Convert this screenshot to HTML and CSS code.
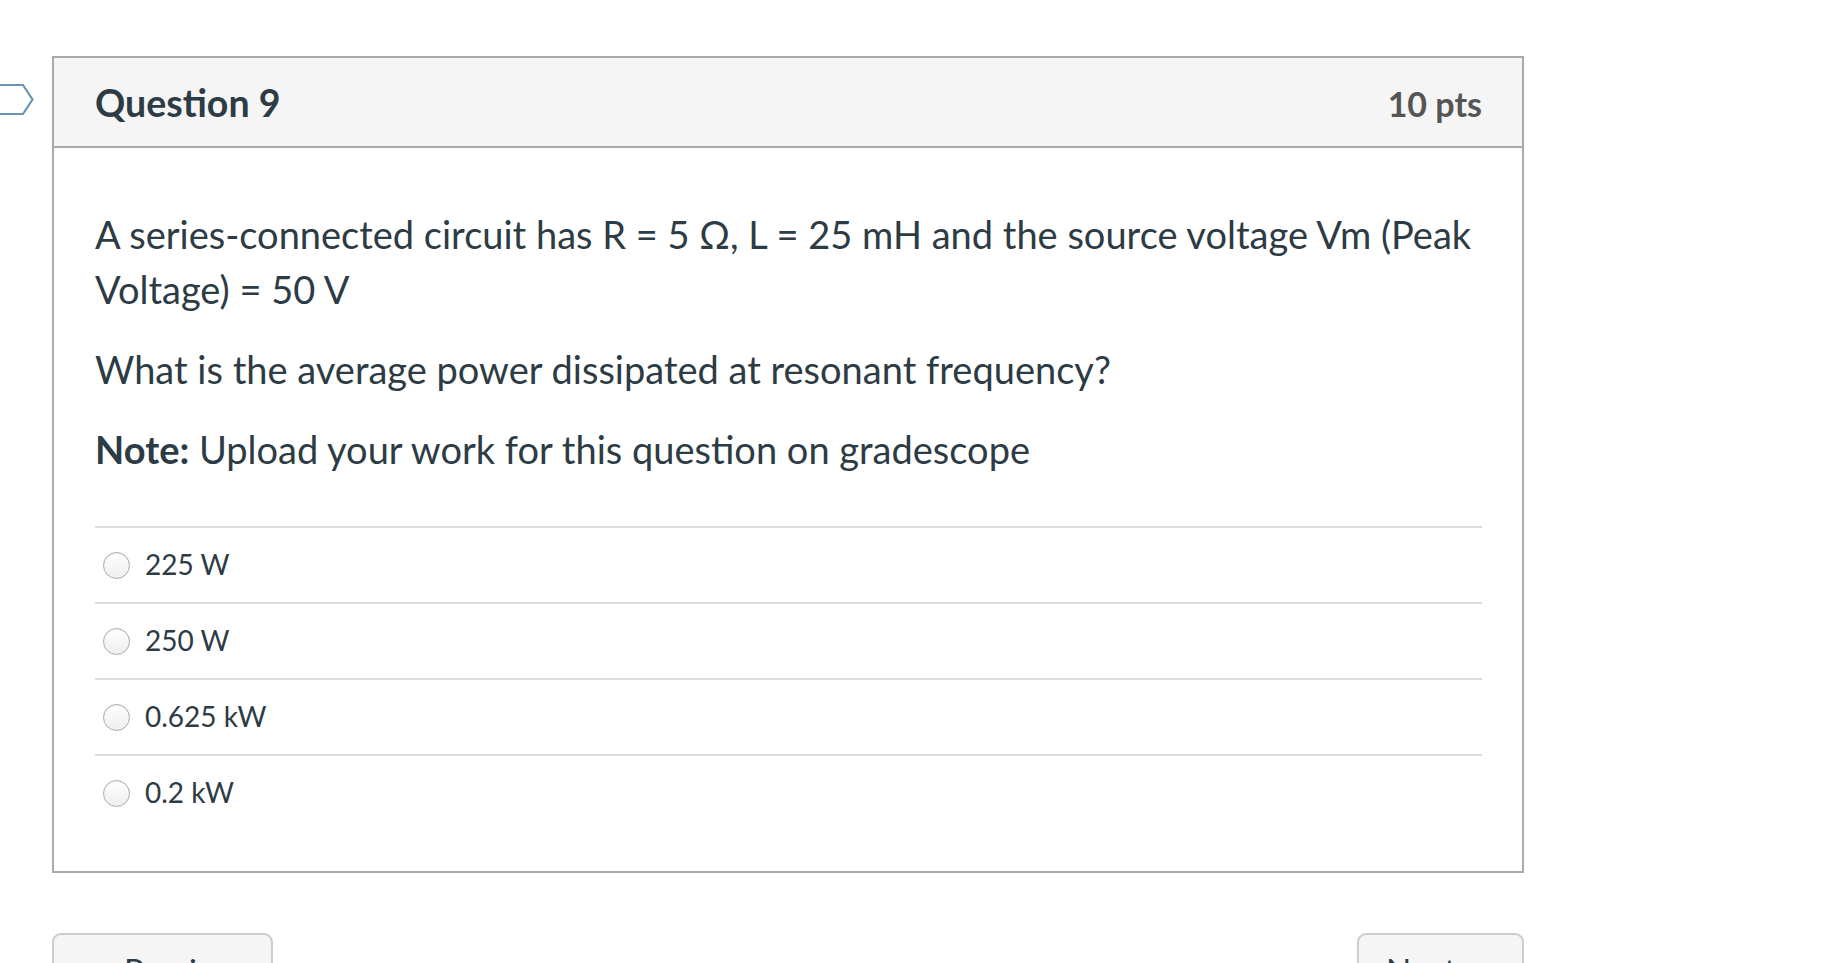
FILE: index.html
```html
<!DOCTYPE html>
<html lang="en">
<head>
<meta charset="UTF-8">
<title>Question 9</title>
<link rel="stylesheet" href="styles.css">
</head>
<body>
<div class="quiz">
    <div class="question">
        <svg class="flag" width="36" height="34" viewBox="0 0 36 34">
            <path d="M-4 2 H23 L32.5 16.5 L23 31 H-4" fill="none" stroke="#6a94b4" stroke-width="2.2" stroke-linejoin="miter"/>
        </svg>
        <div class="header">
            <span class="name">Question 9</span>
            <span class="points">10 pts</span>
        </div>
        <div class="text">
            <p>A series-connected circuit has R = 5 &Omega;, L = 25 mH and the source voltage Vm (Peak Voltage) = 50 V</p>
            <p>What is the average power dissipated at resonant frequency?</p>
            <p><strong>Note:</strong> Upload your work for this question on gradescope</p>
            <div class="answers">
                <label class="answer"><span class="radio"></span>225 W</label>
                <label class="answer"><span class="radio"></span>250 W</label>
                <label class="answer"><span class="radio"></span>0.625 kW</label>
                <label class="answer"><span class="radio"></span>0.2 kW</label>
            </div>
        </div>
    </div>
    <div class="nav">
        <button class="btn prev">
            <svg class="arrow" width="12" height="12" viewBox="0 0 12 12"><path d="M9 1 L4 6 L9 11" fill="none" stroke="#2d3b45" stroke-width="2.4"/></svg>
            Previous
        </button>
        <button class="btn next">
            Next
            <svg class="arrow" width="12" height="12" viewBox="0 0 12 12"><path d="M3 1 L8 6 L3 11" fill="none" stroke="#2d3b45" stroke-width="2.4"/></svg>
        </button>
    </div>
</div>
</body>
</html>
```

FILE: styles.css
```css
body {
    margin: 0;
    background: #fff;
    color: #2d3b45;
    font-family: Lato, "Open Sans", sans-serif;
}
.quiz {
    width: 1472px;
    margin-left: 52px;
    padding-top: 56px;
}
.question {
    position: relative;
    border: 2px solid #aaa;
}
.flag {
    position: absolute;
    left: -54px;
    top: 25px;
}
.header {
    display: flex;
    justify-content: space-between;
    align-items: center;
    height: 88px;
    padding: 0 40px 0 41px;
    background: #f5f5f5;
    border-bottom: 2px solid #aaa;
}
.name {
    font-size: 37.5px;
    font-weight: bold;
    padding-top: 1px;
}
.points {
    font-size: 34px;
    font-weight: bold;
    color: #555;
    padding-top: 2px;
}
.text {
    padding: 58.5px 40px 41px 41px;
    font-size: 38px;
    line-height: 55.6px;
}
.text p {
    margin: 0 0 24.4px;
}
.answers {
    margin-top: 48.5px;
}
.answer {
    display: flex;
    align-items: center;
    height: 74px;
    border-top: 2px solid #ddd;
    font-size: 28px;
    padding-left: 8px;
}
.radio {
    width: 25px;
    height: 25px;
    border: 1.5px solid #a9a9a9;
    border-radius: 50%;
    background: linear-gradient(#fff, #eee);
    margin-right: 15px;
    box-shadow: inset 0 1px 1px rgba(0,0,0,0.06);
}
.nav {
    display: flex;
    justify-content: space-between;
    margin-top: 60px;
}
.btn {
    display: flex;
    align-items: center;
    gap: 16px;
    font-family: Lato, "Open Sans", sans-serif;
    font-size: 33px;
    line-height: 40px;
    color: #2d3b45;
    background: #f5f5f5;
    border: 2px solid #c7cdd1;
    border-radius: 9px;
    height: 74px;
    padding: 0;
    cursor: pointer;
}
.arrow {
    flex: none;
    margin-top: 4px;
}
.prev {
    width: 221px;
    padding-left: 42px;
}
.next {
    width: 167px;
    padding-left: 27px;
}
```
